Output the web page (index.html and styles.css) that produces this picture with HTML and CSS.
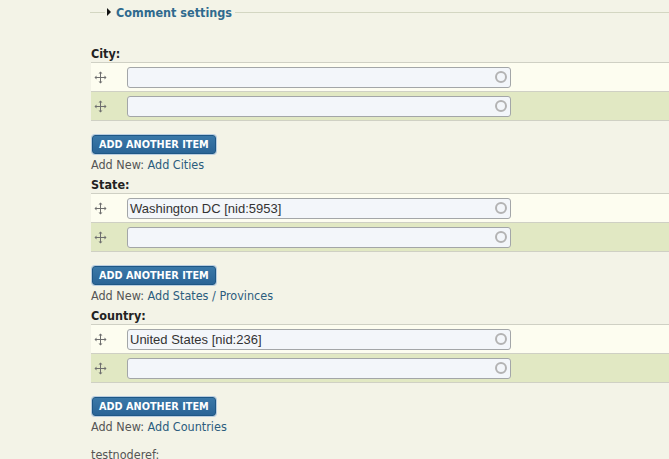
FILE: index.html
```html
<!DOCTYPE html>
<html>
<head>
<meta charset="utf-8">
<link rel="stylesheet" href="styles.css">
</head>
<body>
<div class="page">
  <div class="fieldset">
    <span class="fs-line-short"></span>
    <span class="legend"><span class="tri"></span>Comment settings</span>
    <span class="fs-line"></span>
  </div>

  <div class="field">
    <div class="label">City:</div>
    <div class="table">
      <div class="row odd">
        <span class="drag"><svg viewBox="0 0 13 13" width="13" height="13"><path d="M6.5 1v11M1 6.5h11" stroke="#6f6f6f" stroke-width="1"/><path d="M6.5 0.5l-2 2h4z M6.5 12.5l-2-2h4z M0.5 6.5l2-2v4z M12.5 6.5l-2-2v4z" fill="#6f6f6f"/></svg></span>
        <span class="input"><span class="val"></span><span class="throbber"></span></span>
      </div>
      <div class="row even">
        <span class="drag"><svg viewBox="0 0 13 13" width="13" height="13"><path d="M6.5 1v11M1 6.5h11" stroke="#6f6f6f" stroke-width="1"/><path d="M6.5 0.5l-2 2h4z M6.5 12.5l-2-2h4z M0.5 6.5l2-2v4z M12.5 6.5l-2-2v4z" fill="#6f6f6f"/></svg></span>
        <span class="input"><span class="val"></span><span class="throbber"></span></span>
      </div>
    </div>
    <button class="btn">ADD ANOTHER ITEM</button>
    <div class="addnew">Add New: <a class="link">Add Cities</a></div>
  </div>

  <div class="field">
    <div class="label">State:</div>
    <div class="table">
      <div class="row odd">
        <span class="drag"><svg viewBox="0 0 13 13" width="13" height="13"><path d="M6.5 1v11M1 6.5h11" stroke="#6f6f6f" stroke-width="1"/><path d="M6.5 0.5l-2 2h4z M6.5 12.5l-2-2h4z M0.5 6.5l2-2v4z M12.5 6.5l-2-2v4z" fill="#6f6f6f"/></svg></span>
        <span class="input"><span class="val">Washington DC [nid:5953]</span><span class="throbber"></span></span>
      </div>
      <div class="row even">
        <span class="drag"><svg viewBox="0 0 13 13" width="13" height="13"><path d="M6.5 1v11M1 6.5h11" stroke="#6f6f6f" stroke-width="1"/><path d="M6.5 0.5l-2 2h4z M6.5 12.5l-2-2h4z M0.5 6.5l2-2v4z M12.5 6.5l-2-2v4z" fill="#6f6f6f"/></svg></span>
        <span class="input"><span class="val"></span><span class="throbber"></span></span>
      </div>
    </div>
    <button class="btn">ADD ANOTHER ITEM</button>
    <div class="addnew">Add New: <a class="link">Add States / Provinces</a></div>
  </div>

  <div class="field">
    <div class="label">Country:</div>
    <div class="table">
      <div class="row odd">
        <span class="drag"><svg viewBox="0 0 13 13" width="13" height="13"><path d="M6.5 1v11M1 6.5h11" stroke="#6f6f6f" stroke-width="1"/><path d="M6.5 0.5l-2 2h4z M6.5 12.5l-2-2h4z M0.5 6.5l2-2v4z M12.5 6.5l-2-2v4z" fill="#6f6f6f"/></svg></span>
        <span class="input"><span class="val">United States [nid:236]</span><span class="throbber"></span></span>
      </div>
      <div class="row even">
        <span class="drag"><svg viewBox="0 0 13 13" width="13" height="13"><path d="M6.5 1v11M1 6.5h11" stroke="#6f6f6f" stroke-width="1"/><path d="M6.5 0.5l-2 2h4z M6.5 12.5l-2-2h4z M0.5 6.5l2-2v4z M12.5 6.5l-2-2v4z" fill="#6f6f6f"/></svg></span>
        <span class="input"><span class="val"></span><span class="throbber"></span></span>
      </div>
    </div>
    <button class="btn">ADD ANOTHER ITEM</button>
    <div class="addnew">Add New: <a class="link">Add Countries</a></div>
  </div>

  <div class="plain">testnoderef:</div>
</div>
</body>
</html>
```

FILE: styles.css
```css
html, body {
  margin: 0;
  padding: 0;
  background: #f3f3e7;
  overflow: hidden;
}
body {
  font-family: "DejaVu Sans Condensed", "DejaVu Sans", sans-serif;
  font-size: 12.5px;
  color: #333;
}
.page {
  padding-left: 91px;
  padding-top: 5px;
}
.fieldset {
  display: flex;
  align-items: center;
  height: 14px;
  margin-left: -1px;
}
.fs-line-short {
  width: 15px;
  border-top: 1px solid #d3d6c2;
}
.fs-line {
  flex: 1;
  border-top: 1px solid #d3d6c2;
  margin-left: 3px;
}
.legend {
  display: flex;
  align-items: center;
  font-weight: bold;
  font-size: 12.5px;
  color: #2f6a8e;
  padding-left: 2px;
}
.tri {
  width: 0;
  height: 0;
  border-top: 4px solid transparent;
  border-bottom: 4px solid transparent;
  border-left: 4px solid #111;
  margin-right: 5px;
}
.field {
  display: flex;
  flex-direction: column;
  align-items: flex-start;
}
.fieldset + .field {
  margin-top: 27px;
}
.label {
  font-weight: bold;
  font-size: 12.5px;
  line-height: 16px;
  color: #222;
}
.table {
  align-self: stretch;
  border-top: 1px solid #cfd0c4;
}
.row {
  display: flex;
  align-items: center;
  height: 28px;
  border-bottom: 1px solid #cfd0c4;
}
.row.odd { background: #fdfdf0; }
.row.even { background: #e1e8c3; }
.drag {
  width: 36px;
  display: flex;
  padding-left: 3px;
  box-sizing: border-box;
}
.input {
  display: flex;
  align-items: center;
  justify-content: space-between;
  width: 384px;
  height: 21px;
  box-sizing: border-box;
  border: 1px solid #a3a6a8;
  border-radius: 3px;
  background: #f3f6fa;
  padding: 0 3px 0 2px;
  font-family: "Liberation Sans", Arial, sans-serif;
  font-size: 13px;
  color: #333;
}
.throbber {
  flex-shrink: 0;
  width: 12px;
  height: 12px;
  box-sizing: border-box;
  border: 2px solid #b3b3b3;
  border-radius: 50%;
}
.btn {
  margin-top: 14px;
  height: 19px;
  padding: 0 6px;
  border: 1px solid #1e5785;
  border-radius: 3px;
  background: linear-gradient(#3a78a8, #2a6496);
  box-shadow: 0 0 0 1px #b9cde0;
  color: #fff;
  font-family: "DejaVu Sans Condensed", "DejaVu Sans", sans-serif;
  font-weight: bold;
  font-size: 10.8px;
  line-height: 17px;
  margin-left: 1px;
}
.addnew {
  margin-top: 3px;
  line-height: 16px;
  color: #555;
  margin-bottom: 4px;
}
.field:nth-of-type(4) .addnew {
  margin-bottom: 0;
}
.link {
  color: #2b5c7d;
}
.plain {
  margin-top: 12px;
  line-height: 16px;
  color: #555;
}
```
